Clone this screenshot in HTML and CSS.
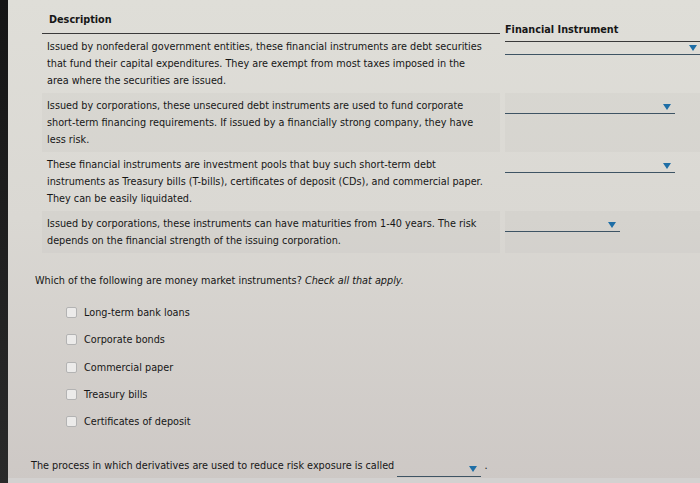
FILE: index.html
```html
<!DOCTYPE html>
<html>
<head>
<meta charset="utf-8">
<link rel="stylesheet" href="styles.css">
</head>
<body>
<div class="frame">
  <div class="edge"></div>
  <div class="page">
    <div class="table">
      <div class="th th-left">Description</div>
      <div class="th th-right">Financial Instrument</div>

      <div class="td desc">Issued by nonfederal government entities, these financial instruments are debt securities<br>that fund their capital expenditures. They are exempt from most taxes imposed in the<br>area where the securities are issued.</div>
      <div class="td pick"><div class="dd w1"><span class="arrow"></span></div></div>

      <div class="td desc alt">Issued by corporations, these unsecured debt instruments are used to fund corporate<br>short-term financing requirements. If issued by a financially strong company, they have<br>less risk.</div>
      <div class="td pick alt"><div class="dd w2"><span class="arrow"></span></div></div>

      <div class="td desc">These financial instruments are investment pools that buy such short-term debt<br>instruments as Treasury bills (T-bills), certificates of deposit (CDs), and commercial paper.<br>They can be easily liquidated.</div>
      <div class="td pick"><div class="dd w2"><span class="arrow"></span></div></div>

      <div class="td desc alt">Issued by corporations, these instruments can have maturities from 1-40 years. The risk<br>depends on the financial strength of the issuing corporation.</div>
      <div class="td pick alt"><div class="dd w3"><span class="arrow"></span></div></div>
    </div>

    <p class="question">Which of the following are money market instruments? <em>Check all that apply.</em></p>

    <ul class="options">
      <li><span class="box"></span>Long-term bank loans</li>
      <li><span class="box"></span>Corporate bonds</li>
      <li><span class="box"></span>Commercial paper</li>
      <li><span class="box"></span>Treasury bills</li>
      <li><span class="box"></span>Certificates of deposit</li>
    </ul>

    <p class="final">The process in which derivatives are used to reduce risk exposure is called <span class="dd inline w4"><span class="arrow"></span></span> .</p>

    <div class="bottom-strip"></div>
  </div>
</div>
</body>
</html>
```

FILE: styles.css
```css
html, body {
  margin: 0;
  padding: 0;
}
body {
  width: 700px;
  height: 483px;
  overflow: hidden;
  font-family: "DejaVu Sans", Verdana, sans-serif;
  font-size: 9.7px;
  color: #161616;
  background: linear-gradient(180deg, #dfded8 0%, #dad8d3 45%, #cdc8c5 100%);
}
.frame {
  display: flex;
  height: 483px;
}
.edge {
  width: 8px;
  flex: none;
  background: linear-gradient(180deg, #151515 0%, #2a2a2a 100%);
}
.page {
  flex: 1;
  display: flex;
  flex-direction: column;
  padding-top: 11px;
  overflow: hidden;
}
.table {
  display: grid;
  grid-template-columns: 458px 200px;
  column-gap: 5px;
  margin-left: 34px;
  line-height: 17px;
}
.th {
  font-weight: bold;
  border-bottom: 1px solid #3a3a3a;
}
.th-left {
  height: 22px;
  padding-left: 7px;
}
.th-right {
  height: 20px;
  padding-top: 10px;
  margin-bottom: -8px;
  align-self: start;
}
.td {
  padding: 4px 0 4px 0;
}
.desc {
  padding-left: 5px;
  white-space: nowrap;
}
.alt {
  background: rgba(120, 120, 120, 0.045);
}
.pick {
  padding-top: 7px;
}
.dd {
  display: flex;
  justify-content: flex-end;
  align-items: center;
  height: 13px;
  border-bottom: 1.5px solid #3e5464;
  box-sizing: content-box;
}
.dd.inline {
  display: inline-flex;
  vertical-align: -3px;
}
.arrow {
  width: 0;
  height: 0;
  border-left: 4.5px solid transparent;
  border-right: 4.5px solid transparent;
  border-top: 6px solid #1e6ea6;
  margin-right: 4px;
}
.w1 { width: 196px; margin-right: -4px; }
.w2 { width: 170px; }
.w3 { width: 115px; }
.w4 { width: 84px; }
.question {
  margin: 19px 0 0 27px;
  line-height: 17px;
}
.question em {
  font-style: italic;
}
.options {
  list-style: none;
  margin: 15px 0 0 58px;
  padding: 0;
  line-height: 17px;
}
.options li {
  display: flex;
  align-items: center;
  margin-bottom: 10.3px;
}
.box {
  width: 9px;
  height: 9px;
  border: 1px solid #b3b3b3;
  border-radius: 2px;
  background: #ecebea;
  margin-right: 7px;
  flex: none;
}
.final {
  margin: 17px 0 0 23px;
  line-height: 17px;
}
.bottom-strip {
  margin-top: auto;
  height: 5px;
  background: #d3d1d0;
}
```
